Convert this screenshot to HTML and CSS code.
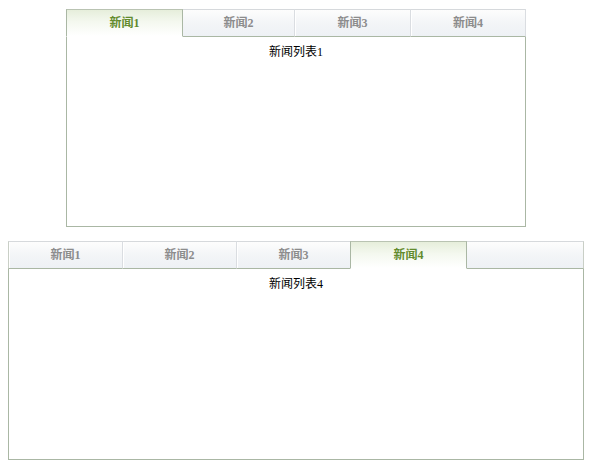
FILE: index.html
```html
<!DOCTYPE html>
<html lang="zh-CN">
<head>
<meta charset="utf-8">
<title>新闻选项卡</title>
<link rel="stylesheet" href="styles.css">
</head>
<body>
<div class="page">
  <div class="tabbox box-top">
    <div class="tabs">
      <div class="tab active">新闻1</div>
      <div class="tab">新闻2</div>
      <div class="tab">新闻3</div>
      <div class="tab">新闻4</div>
    </div>
    <div class="panel">新闻列表1</div>
  </div>
  <div class="tabbox box-bottom">
    <div class="tabs">
      <div class="tab">新闻1</div>
      <div class="tab">新闻2</div>
      <div class="tab">新闻3</div>
      <div class="tab active">新闻4</div>
      <div class="tab empty"></div>
    </div>
    <div class="panel">新闻列表4</div>
  </div>
</div>
</body>
</html>
```

FILE: styles.css
```css
html, body {
  margin: 0;
  padding: 0;
  background: #ffffff;
}

.page {
  display: flex;
  flex-direction: column;
  align-items: flex-start;
  gap: 14px;
  padding-top: 9px;
  font-family: "Liberation Serif", "Noto Sans CJK SC", serif;
  font-size: 12px;
}

.tabbox {
  display: flex;
  flex-direction: column;
}

.box-top {
  margin-left: 66px;
  width: 460px;
}

.box-bottom {
  margin-left: 8px;
  width: 576px;
}

.tabs {
  display: flex;
  height: 28px;
}

.tab {
  box-sizing: border-box;
  height: 28px;
  line-height: 27px;
  text-align: center;
  font-weight: bold;
  color: #8c8c8c;
  background: linear-gradient(to bottom, #fdfdfd 0%, #f3f5f7 50%, #eef1f5 100%);
  border-top: 1px solid #d6d9dc;
  border-right: 1px solid #dadde1;
  border-bottom: 1px solid #aab7a4;
  box-shadow: inset 1px 0 0 #ffffff;
}

.tab:first-child {
  border-left: 1px solid #c9cfc6;
}

.tab.active {
  color: #628b2c;
  background: linear-gradient(to bottom, #e6eedb 0%, #f4f8ef 45%, #ffffff 100%);
  border-top: 1px solid #b9c3b2;
  border-left: 1px solid #aab7a4;
  border-right: 1px solid #aab7a4;
  border-bottom: 1px solid #ffffff;
  box-shadow: none;
}

.tab.active + .tab {
  box-shadow: none;
}

.box-top .tab:nth-child(1) { width: 117px; }
.box-top .tab:nth-child(2) { width: 112px; }
.box-top .tab:nth-child(3) { width: 116px; }
.box-top .tab:nth-child(4) { width: 115px; }

.box-bottom .tab:nth-child(1) { width: 115px; }
.box-bottom .tab:nth-child(2) { width: 114px; }
.box-bottom .tab:nth-child(3) { width: 114px; margin-right: -1px; }
.box-bottom .tab:nth-child(4) { width: 117px; }
.box-bottom .tab:nth-child(5) { width: 117px; border-right: 1px solid #c9cfc6; }

.panel {
  box-sizing: border-box;
  border: 1px solid #aab7a4;
  border-top: none;
  text-align: center;
  color: #000000;
  font-weight: normal;
  padding-top: 7px;
  line-height: 16px;
}

.box-top .panel {
  height: 190px;
}

.box-bottom .panel {
  height: 191px;
}
```
